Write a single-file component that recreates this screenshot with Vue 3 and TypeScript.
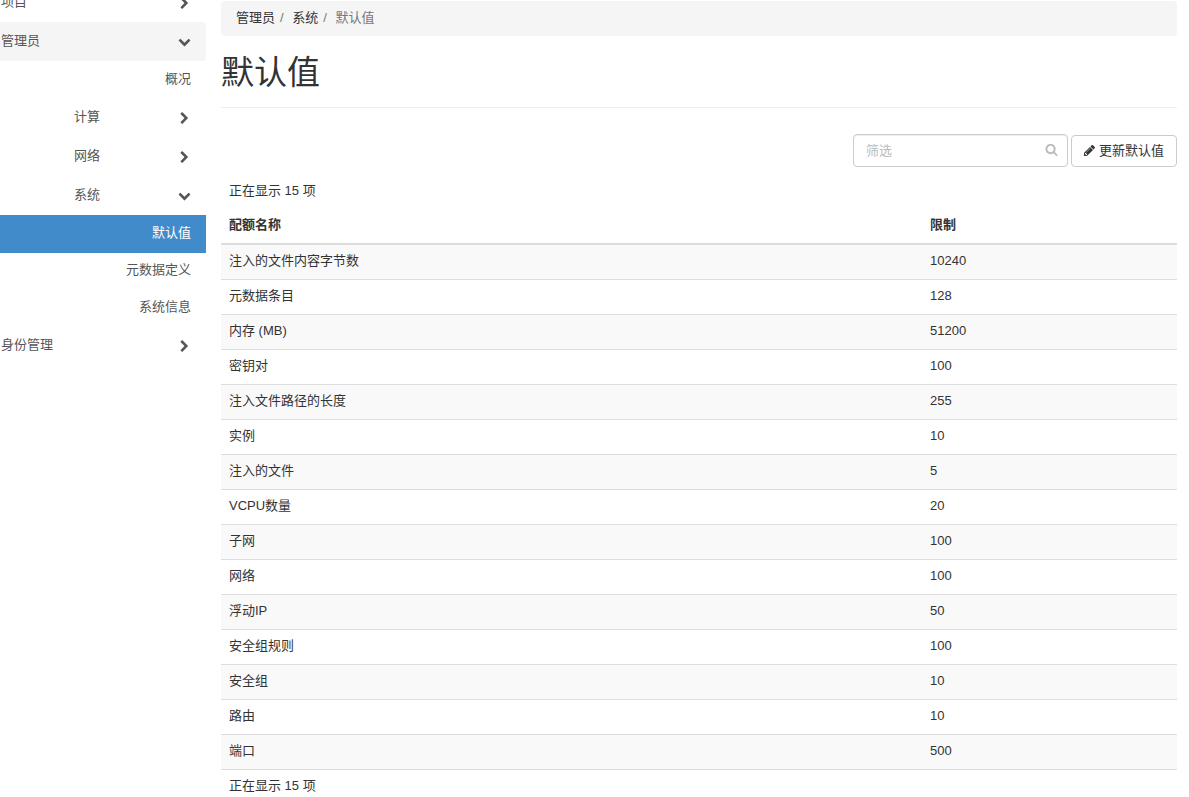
<script setup lang="ts">
interface NavItem {
  label: string
  level: 'top' | 'group' | 'leaf'
  open?: boolean
  active?: boolean
}

interface Quota {
  name: string
  limit: number
}

const nav: NavItem[] = [
  { label: '项目', level: 'top' },
  { label: '管理员', level: 'top', open: true },
  { label: '概况', level: 'leaf' },
  { label: '计算', level: 'group' },
  { label: '网络', level: 'group' },
  { label: '系统', level: 'group', open: true },
  { label: '默认值', level: 'leaf', active: true },
  { label: '元数据定义', level: 'leaf' },
  { label: '系统信息', level: 'leaf' },
  { label: '身份管理', level: 'top' },
]

const quotas: Quota[] = [
  { name: '注入的文件内容字节数', limit: 10240 },
  { name: '元数据条目', limit: 128 },
  { name: '内存 (MB)', limit: 51200 },
  { name: '密钥对', limit: 100 },
  { name: '注入文件路径的长度', limit: 255 },
  { name: '实例', limit: 10 },
  { name: '注入的文件', limit: 5 },
  { name: 'VCPU数量', limit: 20 },
  { name: '子网', limit: 100 },
  { name: '网络', limit: 100 },
  { name: '浮动IP', limit: 50 },
  { name: '安全组规则', limit: 100 },
  { name: '安全组', limit: 10 },
  { name: '路由', limit: 10 },
  { name: '端口', limit: 500 },
]

const chevronRight =
  'M1363 877l-742 742q-19 19-45 19t-45-19l-166-166q-19-19-19-45t19-45l531-531-531-531q-19-19-19-45t19-45l166-166q19-19 45-19t45 19l742 742q19 19 19 45t-19 45z'
const chevronDown =
  'M1683 808l-742 741q-19 19-45 19t-45-19l-742-741q-19-19-19-45.5t19-45.5l166-165q19-19 45-19t45 19l531 531 531-531q19-19 45-19t45 19l166 165q19 19 19 45.5t-19 45.5z'
</script>

<template>
  <div class="page">
    <nav class="sidebar" aria-label="主导航">
      <template v-for="item in nav" :key="item.label">
        <a
          v-if="item.level === 'leaf'"
          href="#"
          class="leaf"
          :class="{ active: item.active }"
        >{{ item.label }}</a>
        <button
          v-else
          type="button"
          class="toggle"
          :class="[item.level, { open: item.open }]"
          :aria-expanded="!!item.open"
        >
          <span>{{ item.label }}</span>
          <svg class="icon" viewBox="0 0 1792 1792" aria-hidden="true">
            <path :d="item.open ? chevronDown : chevronRight" />
          </svg>
        </button>
      </template>
    </nav>

    <main class="content">
      <ol class="breadcrumb">
        <li><a href="#">管理员</a></li>
        <li><a href="#">系统</a></li>
        <li class="current">默认值</li>
      </ol>

      <h1>默认值</h1>

      <div class="actions">
        <div class="search">
          <input type="text" placeholder="筛选" aria-label="筛选" />
          <svg class="icon search-icon" viewBox="0 0 1792 1792" aria-hidden="true">
            <path d="M1216 832q0-185-131.5-316.5t-316.5-131.5-316.5 131.5-131.5 316.5 131.5 316.5 316.5 131.5 316.5-131.5 131.5-316.5zm512 832q0 52-38 90t-90 38q-54 0-90-38l-343-342q-179 124-399 124-143 0-273.5-55.5t-225-150-150-225-55.5-273.5 55.5-273.5 150-225 225-150 273.5-55.5 273.5 55.5 225 150 150 225 55.5 273.5q0 220-124 399l343 343q37 37 37 90z" />
          </svg>
        </div>
        <button type="button" class="update">
          <svg class="icon" viewBox="0 0 1792 1792" aria-hidden="true">
            <path d="M491 1536l91-91-235-235-91 91v107h128v128h107zm523-928q0-22-22-22-10 0-17 7l-542 542q-7 7-7 17 0 22 22 22 10 0 17-7l542-542q7-7 7-17zm-54-192l416 416-832 832h-416v-416zm683 96q0 53-37 90l-166 166-416-416 166-165q36-38 90-38 53 0 91 38l235 234q37 39 37 91z" />
          </svg>
          <span>更新默认值</span>
        </button>
      </div>

      <p class="count">正在显示 {{ quotas.length }} 项</p>
      <table>
        <thead>
          <tr>
            <th class="name" scope="col">配额名称</th>
            <th scope="col">限制</th>
          </tr>
        </thead>
        <tbody>
          <tr v-for="quota in quotas" :key="quota.name">
            <td>{{ quota.name }}</td>
            <td>{{ quota.limit }}</td>
          </tr>
        </tbody>
      </table>
      <p class="count">正在显示 {{ quotas.length }} 项</p>
    </main>
  </div>
</template>

<style>
html,
body {
  background: #fff;
}
body {
  margin: 0;
  overflow: hidden;
}
</style>

<style scoped>
.page,
.page button,
.page input {
  font-family: 'Liberation Sans', Arial, 'Noto Sans CJK SC', sans-serif;
  font-size: 13px;
  line-height: 18px;
  color: #333;
}
.page {
  display: flex;
  align-items: flex-start;
}
.page * {
  box-sizing: border-box;
}
.icon {
  display: block;
  flex: none;
  width: 13px;
  height: 13px;
  fill: currentColor;
}

.sidebar {
  flex: none;
  display: flex;
  flex-direction: column;
  width: 206px;
  margin-top: -17px;
}
.page .toggle {
  display: flex;
  align-items: center;
  justify-content: space-between;
  height: 39px;
  padding: 0 15px 1px 1px;
  border: 0;
  border-radius: 0 4px 4px 0;
  background: transparent;
  color: #555;
  text-align: left;
}
.page .group {
  padding-left: 74px;
}
.toggle:not(.open) .icon {
  margin-top: 2px;
}
.top.open {
  background: #f5f5f5;
}
.leaf {
  height: 37px;
  padding: 9px 15px;
  color: #555;
  text-align: right;
  text-decoration: none;
}
.leaf.active {
  height: 38px;
  background: #428bca;
  color: #fff;
}
.leaf.active + .leaf {
  margin-top: -1px;
}

.content {
  flex: 1;
  min-width: 0;
  padding: 1px 12px 0 15px;
}
.breadcrumb {
  display: flex;
  margin: 0;
  padding: 8px 15px 9px;
  border-radius: 4px;
  background: #f5f5f5;
  list-style: none;
}
.breadcrumb a {
  color: #333;
  text-decoration: none;
}
.breadcrumb .current {
  color: #777;
}
.breadcrumb li + li::before {
  content: '/\00a0';
  padding: 0 5px;
  color: #777;
}
h1 {
  margin: 0;
  padding: 17px 0 14px;
  border-bottom: 1px solid #eee;
  font-size: 33px;
  font-weight: 400;
  line-height: 40px;
}

.actions {
  display: flex;
  justify-content: flex-end;
  align-items: flex-end;
  gap: 3px;
  margin-top: 26px;
}
.search {
  position: relative;
  width: 215px;
}
.search input {
  display: block;
  width: 100%;
  height: 33px;
  padding: 6px 32px 7px 12px;
  border: 1px solid #ccc;
  border-radius: 4px;
  background: #fff;
  box-shadow: inset 0 1px 1px rgba(0, 0, 0, 0.075);
}
.search input::placeholder {
  color: #bbb;
  opacity: 1;
}
.search-icon {
  position: absolute;
  top: 9px;
  right: 10px;
  color: #bbb;
}
.update {
  display: flex;
  align-items: center;
  gap: 3px;
  height: 32px;
  padding: 0 12px 1px 11px;
  border: 1px solid #ccc;
  border-radius: 4px;
  background: #fff;
}

.count {
  margin: 0;
  padding: 7px 8px 9px;
}
.actions + .count {
  margin-top: 8px;
}
table {
  width: 100%;
  border-collapse: separate;
  border-spacing: 0;
  table-layout: fixed;
}
th,
td {
  padding: 7px 8px 9px;
  border-bottom: 1px solid #ddd;
  text-align: left;
}
th {
  height: 36px;
  border-bottom-width: 2px;
}
td {
  height: 35px;
}
.name {
  width: 73.33%;
}
tbody tr:nth-child(odd) {
  background: #f9f9f9;
}
</style>
